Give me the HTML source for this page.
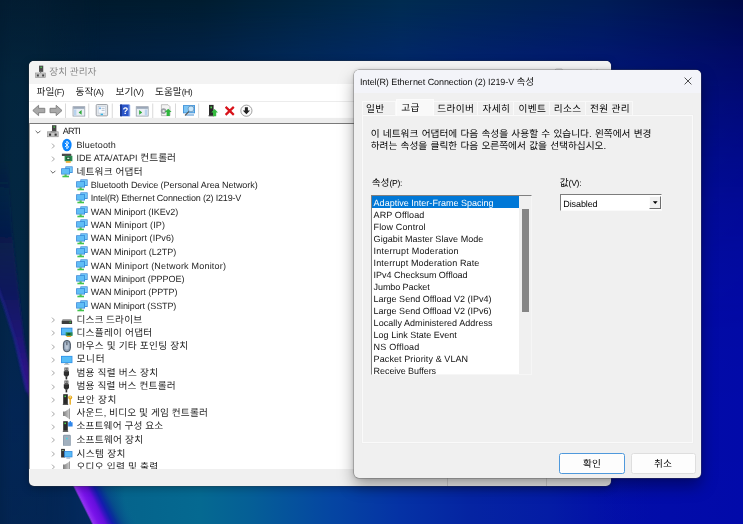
<!DOCTYPE html>
<html lang="ko"><head><meta charset="utf-8"><title>장치 관리자</title>
<style>
*{box-sizing:border-box;margin:0;padding:0}
html,body{width:743px;height:524px;overflow:hidden}
body{position:relative;-webkit-font-smoothing:antialiased;text-rendering:geometricPrecision;font-family:"Liberation Sans","Noto Sans CJK KR",sans-serif;font-size:9px;color:#000;
background:#0a1a3c;}
#wall{position:absolute;left:0;top:0;width:743px;height:524px;}
#dm{will-change:transform;position:absolute;left:29px;top:61px;width:582px;height:425px;background:#f0f0f0;border-radius:5px;overflow:hidden;box-shadow:0 0 0 0.5px rgba(60,60,60,.5),0 2px 8px rgba(0,0,0,.3)}
#dm .title{position:absolute;left:0;top:0;width:100%;height:23px;background:#f3f3f3}
#dm .title .t{position:absolute;left:20.3px;top:6.2px;color:#8a8a8a;font-size:9.67px;line-height:12px;white-space:nowrap}
#dm .menu{position:absolute;left:0;top:23px;width:100%;height:16.5px;background:#fff}
#dm .menu span{position:absolute;top:2.4px;line-height:12px;white-space:nowrap;font-size:9.67px;color:#1a1a1a}
#dm .menu small{font-size:8.7px;letter-spacing:-0.5px}
#dm .tool{position:absolute;left:0;top:39.5px;width:100%;height:22px;background:#fff}
#dm .tool .sep{position:absolute;top:3px;width:1px;height:15px;background:#d0d0d0}
#dm .tool svg{position:absolute}
#tree{position:absolute;left:0;top:61.5px;width:100%;height:346px;background:#fff;border-top:1px solid #7a7a7a;border-left:1.5px solid #a4a4a4;overflow:hidden}
.tr{position:absolute;left:0;height:13.4px;width:100%}
.tr .ch{position:absolute;top:2.7px;width:8px;height:8px}
.tr .ic{position:absolute;top:-0.2px;width:12px;height:12px;overflow:visible}
.k{font-size:9.67px;position:relative;top:0.35px}
.tr .tt{position:absolute;top:-0.45px;color:#1e1e1e;line-height:12px;white-space:nowrap;font-size:9px}
#dlg{will-change:transform;position:absolute;left:354px;top:70px;width:347px;height:408px;background:#f0f0f0;border-radius:5px;overflow:hidden;box-shadow:0 0 0 0.5px rgba(80,80,80,.6), 0 8px 16px rgba(0,0,0,.36),0 0 4px rgba(0,0,0,.18)}
#dlg .title{position:absolute;left:-0.5px;top:0;width:347px;height:22.8px;background:#f3f4f9}
#dlg .title .t{position:absolute;letter-spacing:-0.075px;left:5.9px;top:5.5px;line-height:12px;white-space:nowrap;font-size:9px;color:#111}
#dlg .x{position:absolute;left:329.5px;top:7px;width:8px;height:8px}
.tab{position:absolute;top:31px;line-height:12px;white-space:nowrap;font-size:9.67px;letter-spacing:0.35px}
#panel{position:absolute;left:7px;top:45.3px;width:331.3px;height:327.7px;background:#f0f0f0;border:1px solid #fafafa;box-shadow:0 0 0 0.5px #ececec}
#seltab{position:absolute;left:41.5px;top:29px;width:38.2px;height:17.2px;background:#f9f9f9;border:1px solid #fcfcfc;border-bottom:none}
.utab{position:absolute;top:30.8px;height:14.8px;border:1px solid #f9f9f9;border-bottom:none;border-left:none}
.lbl small{font-size:8.6px;letter-spacing:-0.3px}
.lbl{position:absolute;line-height:12px;white-space:nowrap;font-size:9.67px}
#list{position:absolute;left:16.5px;top:124.5px;width:161px;height:180.5px;background:#fff;border:1px solid #808080;border-left-width:1.2px;border-right-color:#f6f6f6;border-bottom-color:#f6f6f6;overflow:hidden}
#track{position:absolute;left:146.7px;top:0;width:13.2px;height:100%;background:#f0f0f0}
#list .in{display:none}
.li{position:absolute;left:0;height:12px;line-height:14.2px;font-size:9px;white-space:nowrap;padding-left:1.6px;color:#111}
.li.sel{background:#0078d7;color:#fff;width:146.7px;height:11.9px}
#thumb{position:absolute;left:149.9px;top:13.1px;width:6.9px;height:103.7px;background:#858585}
#combo{position:absolute;left:205.5px;top:124.3px;width:102px;height:16.4px;background:#fff;border:1.2px solid #7c7c7c;border-right:1px solid #fafafa;border-bottom:1px solid #fafafa}
#combo .tx{position:absolute;left:2.3px;top:3.1px;letter-spacing:-0.1px;line-height:12px;font-size:9px}
#combo .btn{position:absolute;right:0;top:0.3px;width:12px;height:13.8px;background:#f0f0f0;border:1px solid #fdfdfd;border-right-color:#6e6e6e;border-bottom-color:#6e6e6e}
.btnk{position:absolute;top:383.2px;height:20.5px;background:#fdfdfd;border:1px solid #dedede;border-radius:2.5px;text-align:center;line-height:21.4px;font-size:9.67px}
</style></head><body>
<svg id="wall" viewBox="0 0 743 524" preserveAspectRatio="none">
<defs>
<linearGradient id="gt" x1="0" y1="0" x2="1" y2="0">
<stop offset="0" stop-color="#02182b"/><stop offset="0.27" stop-color="#001d30"/><stop offset="0.54" stop-color="#002c50"/><stop offset="0.81" stop-color="#001d56"/><stop offset="1" stop-color="#000a48"/>
</linearGradient>
<linearGradient id="gb" x1="0" y1="0" x2="1" y2="0">
<stop offset="0" stop-color="#031b3a"/><stop offset="0.1" stop-color="#032a5e"/><stop offset="0.4" stop-color="#05308c"/><stop offset="0.62" stop-color="#0318a2"/><stop offset="0.8" stop-color="#020ea8"/><stop offset="1" stop-color="#020aaa"/>
</linearGradient>
<linearGradient id="gm" x1="0" y1="0" x2="0" y2="1"><stop offset="0.0" stop-color="#fff" stop-opacity="0.000"/><stop offset="0.1" stop-color="#fff" stop-opacity="0.286"/><stop offset="0.2" stop-color="#fff" stop-opacity="0.510"/><stop offset="0.3" stop-color="#fff" stop-opacity="0.681"/><stop offset="0.4" stop-color="#fff" stop-opacity="0.805"/><stop offset="0.5" stop-color="#fff" stop-opacity="0.891"/><stop offset="0.6" stop-color="#fff" stop-opacity="0.947"/><stop offset="0.7" stop-color="#fff" stop-opacity="0.979"/><stop offset="0.8" stop-color="#fff" stop-opacity="0.994"/><stop offset="0.9" stop-color="#fff" stop-opacity="0.999"/><stop offset="1.0" stop-color="#fff" stop-opacity="1.000"/></linearGradient>
<mask id="mk"><rect width="743" height="524" fill="url(#gm)"/></mask>
<linearGradient id="gteal" gradientUnits="userSpaceOnUse" x1="0" y1="0" x2="743" y2="0">
<stop offset="0.129" stop-color="#04407a"/><stop offset="0.168" stop-color="#05648c"/><stop offset="0.27" stop-color="#056991"/><stop offset="0.336" stop-color="#055f96"/><stop offset="0.444" stop-color="#0546a2"/><stop offset="0.538" stop-color="#0532a5"/><stop offset="0.633" stop-color="#0524a2"/><stop offset="0.74" stop-color="#041ca5"/><stop offset="0.875" stop-color="#0310a8" stop-opacity="0"/>
</linearGradient>
<radialGradient id="teal" cx="0.5" cy="0.5" r="0.5">
<stop offset="0" stop-color="#067090" stop-opacity="1"/><stop offset="0.5" stop-color="#066a90" stop-opacity="0.9"/><stop offset="1" stop-color="#06569a" stop-opacity="0"/>
</radialGradient>
<linearGradient id="gs" x1="0" y1="0" x2="1" y2="0">
<stop offset="0" stop-color="#9a3af4" stop-opacity="0.4"/><stop offset="0.03" stop-color="#9030f2"/><stop offset="0.12" stop-color="#7a14ea"/><stop offset="0.24" stop-color="#640edc"/><stop offset="0.3" stop-color="#3a14c4"/><stop offset="0.37" stop-color="#141cae"/><stop offset="0.44" stop-color="#08309a"/><stop offset="0.56" stop-color="#064c8c" stop-opacity="0.8"/><stop offset="0.85" stop-color="#066a90" stop-opacity="0"/>
</linearGradient>
<linearGradient id="gband" gradientUnits="userSpaceOnUse" x1="0" y1="160" x2="0" y2="400">
<stop offset="0" stop-color="#0c1a56" stop-opacity="0"/><stop offset="0.3" stop-color="#0a1850" stop-opacity="0.6"/><stop offset="0.55" stop-color="#10165e" stop-opacity="0.95"/><stop offset="0.8" stop-color="#241480" stop-opacity="1"/><stop offset="1" stop-color="#4414a2" stop-opacity="1"/>
</linearGradient>
<linearGradient id="gl" gradientUnits="userSpaceOnUse" x1="0" y1="0" x2="0" y2="524">
<stop offset="0" stop-color="#031f35" stop-opacity="0.7"/><stop offset="0.16" stop-color="#03263e" stop-opacity="0.95"/><stop offset="0.5" stop-color="#032844" stop-opacity="0.95"/><stop offset="0.78" stop-color="#032655" stop-opacity="0.95"/><stop offset="1" stop-color="#032655" stop-opacity="0.9"/>
</linearGradient>
<linearGradient id="glm" gradientUnits="userSpaceOnUse" x1="0" y1="0" x2="100" y2="0">
<stop offset="0" stop-color="#fff" stop-opacity="0.75"/><stop offset="0.12" stop-color="#fff" stop-opacity="1"/><stop offset="0.35" stop-color="#fff" stop-opacity="1"/><stop offset="1" stop-color="#fff" stop-opacity="0"/>
</linearGradient>
<mask id="mkl"><rect width="100" height="524" fill="url(#glm)"/></mask>
<filter id="bl" x="-50%" y="-50%" width="200%" height="200%"><feGaussianBlur stdDeviation="1.2"/></filter>
<filter id="bl2" x="-50%" y="-50%" width="200%" height="200%"><feGaussianBlur stdDeviation="5"/></filter>
<clipPath id="cp"><path d="M96 480 L743 480 L743 524 L118 524 Z"/></clipPath>
</defs>
<rect width="743" height="524" fill="url(#gt)"/>
<rect width="743" height="524" fill="url(#gb)" mask="url(#mk)"/>
<rect width="100" height="524" fill="url(#gl)" mask="url(#mkl)"/>
<g clip-path="url(#cp)"><rect x="0" y="470" width="743" height="54" fill="url(#gteal)"/></g>
<path d="M29.5 368 L24 340 L20 305 L16 268 L12 230 L10 200 L8 160 L-5 160 L-5 286 L4 305 L15 340 L26 389 L31 400 Z" fill="url(#gband)" filter="url(#bl)"/>
<path d="M-2 288 L4 305 L15 340 L27 392" fill="none" stroke="#2a28a6" stroke-width="2" opacity="0.65" filter="url(#bl)"/>
<g transform="translate(74,487) skewX(26.6)"><rect x="-0.5" y="-6" width="56" height="46" fill="url(#gs)"/></g>
</svg>
<div id="dm">
 <div class="title"><svg viewBox="0 0 12 14" style="position:absolute;left:6.2px;top:4px;width:11px;height:13px"><rect x="4.4" y="0.6" width="4.6" height="6.8" fill="#4a4a4a"/><rect x="5.9" y="1.8" width="1.6" height="1.4" fill="#4fd24f"/><rect x="5.6" y="7" width="1.2" height="2" fill="#777"/><rect x="0.6" y="8.6" width="10.8" height="5" fill="#c8c8c8" stroke="#8a8a8a" stroke-width="0.6"/><rect x="2" y="10.2" width="2.2" height="2.2" fill="#444"/><rect x="7.8" y="10.2" width="2.2" height="2.2" fill="#444"/></svg><span class="t">장치 관리자</span>
 <svg viewBox="0 0 70 12" style="position:absolute;left:506px;top:6px;width:70px;height:12px"><path d="M2 6 H9" stroke="#b4b4b4" stroke-width="0.8"/><rect x="20.4" y="2" width="7" height="7" rx="1" fill="none" stroke="#b4b4b4" stroke-width="0.8"/><path d="M55.5 2 L62.5 9 M62.5 2 L55.5 9" stroke="#b4b4b4" stroke-width="0.8"/></svg></div>
 <div class="menu"><span style="left:7.5px">파일<small>(F)</small></span><span style="left:46.5px">동작<small>(A)</small></span><span style="left:86.5px">보기<small>(V)</small></span><span style="left:126px">도움말<small>(H)</small></span></div>
 <div class="tool"><svg viewBox="29 100.5 582 22" style="left:0;top:0;width:582px;height:22px">
<rect x="29" y="117.4" width="582" height="5.2" fill="#ededed"/><rect x="29" y="100.5" width="582" height="0.6" fill="#e0e0e0"/>
<g fill="#d0d0d0"><rect x="65.2" y="103" width="0.8" height="14.5"/><rect x="88.4" y="103" width="0.8" height="14.5"/><rect x="111.8" y="103" width="0.8" height="14.5"/><rect x="152.4" y="103" width="0.8" height="14.5"/><rect x="175" y="103" width="0.8" height="14.5"/><rect x="198.3" y="103" width="0.8" height="14.5"/></g>
<path d="M32.8 110 L38.6 104.8 L38.6 107.8 L44.8 107.8 L44.8 112.2 L38.6 112.2 L38.6 115.2 Z" fill="#a8a8a8" stroke="#7e7e7e" stroke-width="0.9" stroke-linejoin="round"/>
<path d="M62 110 L56.2 104.8 L56.2 107.8 L50 107.8 L50 112.2 L56.2 112.2 L56.2 115.2 Z" fill="#a8a8a8" stroke="#7e7e7e" stroke-width="0.9" stroke-linejoin="round"/>
<g><rect x="73" y="106.2" width="11.8" height="9.4" fill="#e9eef4" stroke="#8b95a3" stroke-width="0.7"/><rect x="73.3" y="106.5" width="11.2" height="1.8" fill="#9aa7b8"/><rect x="74" y="109" width="2.4" height="6" fill="#b9d3ee"/><path d="M81.6 109.6 L81.6 114.2 L78.6 111.9 Z" fill="#2eaa3a"/></g>
<g><rect x="96.2" y="104" width="11.4" height="11.4" rx="1" fill="#e4e8ec" stroke="#8a8f96" stroke-width="0.8"/><rect x="98.2" y="106" width="7.4" height="6.6" fill="#f7fbff" stroke="#b8c4d2" stroke-width="0.5"/><rect x="99.2" y="107" width="1.6" height="1.6" fill="#5aa0e0"/><rect x="101.6" y="107.4" width="3" height="0.7" fill="#9ab"/><rect x="101.6" y="109.4" width="3" height="0.7" fill="#9ab"/><rect x="100.6" y="113.2" width="2.4" height="1.4" fill="#35b6e8"/></g>
<g><rect x="120" y="104" width="9.8" height="11.8" rx="0.8" fill="#2a55c8"/><rect x="120" y="104" width="2" height="11.8" fill="#1c3c9a"/><rect x="128.6" y="104.6" width="1.6" height="11.2" fill="#7f9fe8"/><text x="125.4" y="113.6" font-family="Liberation Sans,sans-serif" font-size="9.5" font-weight="bold" fill="#fff" text-anchor="middle">?</text></g>
<g><rect x="136.2" y="106.2" width="12" height="9.4" fill="#e9eef4" stroke="#8b95a3" stroke-width="0.7"/><rect x="136.5" y="106.5" width="11.4" height="1.8" fill="#9aa7b8"/><rect x="144.8" y="109" width="2.4" height="6" fill="#b9d3ee"/><path d="M139.2 109.6 L139.2 114.2 L142.2 111.9 Z" fill="#2eaa3a"/></g>
<g><path d="M161.4 104.2 H168 L170 106.2 V115.2 H161.4 Z" fill="#f4f4f4" stroke="#9a9a9a" stroke-width="0.6"/><circle cx="163.6" cy="110.6" r="2.8" fill="#9a9ea4"/><circle cx="163.6" cy="110.6" r="1.2" fill="#e8e8e8"/><path d="M168.2 108.2 L171.6 111.6 H169.8 V115.6 H166.6 V111.6 H164.8 Z" fill="#2fb53c"/></g>
<g><rect x="183" y="104.6" width="12" height="8.2" fill="#3d8fd8"/><rect x="183.8" y="105.4" width="10.4" height="6.6" fill="#7cc4f4"/><rect x="186" y="114" width="8" height="1" fill="#4a90d0"/><circle cx="191" cy="108.4" r="2.9" fill="#c8e6fa" stroke="#5a86b0" stroke-width="0.7"/><path d="M189 110.8 L185 115" stroke="#555" stroke-width="1.1"/></g>
<g><rect x="209" y="104.4" width="4.6" height="10.6" fill="#2a2a2a"/><rect x="208.6" y="114.6" width="5.6" height="1.2" fill="#444"/><rect x="210.4" y="106" width="1.6" height="1.8" fill="#4ad04a"/><path d="M214.6 108.6 L218 112 H216.2 V115.8 H213 V112 H211.2 Z" fill="#35bb40"/></g>
<path d="M225.6 106.4 L233.8 114.4 M233.8 106.4 L225.6 114.4" stroke="#d8121a" stroke-width="2.2" fill="none"/>
<g><circle cx="246.4" cy="110.2" r="5.6" fill="#fafafa" stroke="#8a8a8a" stroke-width="0.8"/><path d="M244.9 106.8 H247.9 V110 H250 L246.4 113.8 L242.8 110 H244.9 Z" fill="#222"/></g>
</svg></div>
 <div id="tree">
<div class="tr" style="top:2.1px;left:-1.5px"><svg class="ch" style="left:5.7px" viewBox="0 0 8 8"><path d="M1.6 2.8 L4 5.2 L6.4 2.8" fill="none" stroke="#555" stroke-width="0.9"/></svg><svg class="ic" style="left:18.0px" viewBox="0 0 12 12"><rect x="5" y="0.2" width="4.4" height="6.6" fill="#454545"/><rect x="6.5" y="1.4" width="1.5" height="1.3" fill="#4fd24f"/><rect x="0.6" y="6.8" width="10.6" height="5" fill="#c4c4c4" stroke="#8c8c8c" stroke-width="0.6"/><rect x="3.6" y="6" width="5" height="1.6" fill="#8e8e8e"/><rect x="2" y="8.6" width="2.1" height="2.1" fill="#333"/><rect x="7.6" y="8.6" width="2.1" height="2.1" fill="#333"/></svg><span class="tt" style="left:34.2px;letter-spacing:-0.717px;">ARTI</span></div>
<div class="tr" style="top:15.5px;left:-1.5px"><svg class="ch" style="left:20.0px" viewBox="0 0 8 8"><path d="M3 1.6 L5.4 4 L3 6.4" fill="none" stroke="#999" stroke-width="0.9"/></svg><svg class="ic" style="left:32.7px" viewBox="0 0 12 12"><ellipse cx="5.9" cy="6" rx="4.7" ry="6.3" fill="#0a84ff"/><path d="M3.9 3.9 L7.7 7.9 L5.9 9.8 L5.9 2.2 L7.7 4.1 L3.9 8.1" stroke="#fff" stroke-width="0.9" fill="none"/></svg><span class="tt" style="left:47.9px;letter-spacing:0.162px;">Bluetooth</span></div>
<div class="tr" style="top:28.9px;left:-1.5px"><svg class="ch" style="left:20.0px" viewBox="0 0 8 8"><path d="M3 1.6 L5.4 4 L3 6.4" fill="none" stroke="#999" stroke-width="0.9"/></svg><svg class="ic" style="left:32.7px" viewBox="0 0 12 12"><rect x="0.9" y="1.2" width="9" height="1" fill="#bdbdbd"/><rect x="0.9" y="2" width="9.4" height="2" fill="#4a4a4a"/><rect x="3.6" y="3.8" width="7.8" height="5.4" fill="#2b8c52"/><rect x="5.3" y="5" width="4" height="2.8" fill="#174f2e"/><rect x="6.2" y="5.7" width="2.2" height="1.4" fill="#cfe8d6"/><rect x="4.8" y="9.2" width="5" height="1.5" fill="#e6a21c"/></svg><span class="tt" style="left:47.9px;letter-spacing:0.071px;">IDE ATA/ATAPI <span class="k">컨트롤러</span></span></div>
<div class="tr" style="top:42.3px;left:-1.5px"><svg class="ch" style="left:20.0px" viewBox="0 0 8 8"><path d="M1.6 2.8 L4 5.2 L6.4 2.8" fill="none" stroke="#555" stroke-width="0.9"/></svg><svg class="ic" style="left:32.7px" viewBox="0 0 12 12"><rect x="4.4" y="0.4" width="7.2" height="6.6" fill="#2b7fd6"/><rect x="5.1" y="1.1" width="5.8" height="5.2" fill="#74caf9"/><rect x="0.2" y="2.3" width="8.8" height="6.2" fill="#2b7fd6"/><rect x="0.9" y="3" width="7.4" height="4.8" fill="#5fbdf6"/><rect x="3.5" y="8.5" width="2.2" height="1.3" fill="#35a83c"/><rect x="1.4" y="9.7" width="6.6" height="1.6" fill="#42c44c"/></svg><span class="tt" style="left:47.9px;letter-spacing:0.214px;"><span class="k">네트워크</span> <span class="k">어댑터</span></span></div>
<div class="tr" style="top:55.7px;left:-1.5px"><svg class="ic" style="left:47.0px" viewBox="0 0 12 12"><rect x="4.4" y="0.4" width="7.2" height="6.6" fill="#2b7fd6"/><rect x="5.1" y="1.1" width="5.8" height="5.2" fill="#74caf9"/><rect x="0.2" y="2.3" width="8.8" height="6.2" fill="#2b7fd6"/><rect x="0.9" y="3" width="7.4" height="4.8" fill="#5fbdf6"/><rect x="3.5" y="8.5" width="2.2" height="1.3" fill="#35a83c"/><rect x="1.4" y="9.7" width="6.6" height="1.6" fill="#42c44c"/></svg><span class="tt" style="left:62.3px;letter-spacing:-0.042px;">Bluetooth Device (Personal Area Network)</span></div>
<div class="tr" style="top:69.1px;left:-1.5px"><svg class="ic" style="left:47.0px" viewBox="0 0 12 12"><rect x="4.4" y="0.4" width="7.2" height="6.6" fill="#2b7fd6"/><rect x="5.1" y="1.1" width="5.8" height="5.2" fill="#74caf9"/><rect x="0.2" y="2.3" width="8.8" height="6.2" fill="#2b7fd6"/><rect x="0.9" y="3" width="7.4" height="4.8" fill="#5fbdf6"/><rect x="3.5" y="8.5" width="2.2" height="1.3" fill="#35a83c"/><rect x="1.4" y="9.7" width="6.6" height="1.6" fill="#42c44c"/></svg><span class="tt" style="left:62.3px;letter-spacing:-0.176px;">Intel(R) Ethe<span style="letter-spacing:0.45px">r</span>net Connection (2) I219-V</span></div>
<div class="tr" style="top:82.5px;left:-1.5px"><svg class="ic" style="left:47.0px" viewBox="0 0 12 12"><rect x="4.4" y="0.4" width="7.2" height="6.6" fill="#2b7fd6"/><rect x="5.1" y="1.1" width="5.8" height="5.2" fill="#74caf9"/><rect x="0.2" y="2.3" width="8.8" height="6.2" fill="#2b7fd6"/><rect x="0.9" y="3" width="7.4" height="4.8" fill="#5fbdf6"/><rect x="3.5" y="8.5" width="2.2" height="1.3" fill="#35a83c"/><rect x="1.4" y="9.7" width="6.6" height="1.6" fill="#42c44c"/></svg><span class="tt" style="left:62.3px;letter-spacing:-0.011px;">WAN Miniport (IKEv2)</span></div>
<div class="tr" style="top:95.9px;left:-1.5px"><svg class="ic" style="left:47.0px" viewBox="0 0 12 12"><rect x="4.4" y="0.4" width="7.2" height="6.6" fill="#2b7fd6"/><rect x="5.1" y="1.1" width="5.8" height="5.2" fill="#74caf9"/><rect x="0.2" y="2.3" width="8.8" height="6.2" fill="#2b7fd6"/><rect x="0.9" y="3" width="7.4" height="4.8" fill="#5fbdf6"/><rect x="3.5" y="8.5" width="2.2" height="1.3" fill="#35a83c"/><rect x="1.4" y="9.7" width="6.6" height="1.6" fill="#42c44c"/></svg><span class="tt" style="left:62.3px;letter-spacing:0.125px;">WAN Miniport (IP)</span></div>
<div class="tr" style="top:109.3px;left:-1.5px"><svg class="ic" style="left:47.0px" viewBox="0 0 12 12"><rect x="4.4" y="0.4" width="7.2" height="6.6" fill="#2b7fd6"/><rect x="5.1" y="1.1" width="5.8" height="5.2" fill="#74caf9"/><rect x="0.2" y="2.3" width="8.8" height="6.2" fill="#2b7fd6"/><rect x="0.9" y="3" width="7.4" height="4.8" fill="#5fbdf6"/><rect x="3.5" y="8.5" width="2.2" height="1.3" fill="#35a83c"/><rect x="1.4" y="9.7" width="6.6" height="1.6" fill="#42c44c"/></svg><span class="tt" style="left:62.3px;letter-spacing:0.083px;">WAN Miniport (IPv6)</span></div>
<div class="tr" style="top:122.7px;left:-1.5px"><svg class="ic" style="left:47.0px" viewBox="0 0 12 12"><rect x="4.4" y="0.4" width="7.2" height="6.6" fill="#2b7fd6"/><rect x="5.1" y="1.1" width="5.8" height="5.2" fill="#74caf9"/><rect x="0.2" y="2.3" width="8.8" height="6.2" fill="#2b7fd6"/><rect x="0.9" y="3" width="7.4" height="4.8" fill="#5fbdf6"/><rect x="3.5" y="8.5" width="2.2" height="1.3" fill="#35a83c"/><rect x="1.4" y="9.7" width="6.6" height="1.6" fill="#42c44c"/></svg><span class="tt" style="left:62.3px;letter-spacing:0.022px;">WAN Miniport (L2TP)</span></div>
<div class="tr" style="top:136.1px;left:-1.5px"><svg class="ic" style="left:47.0px" viewBox="0 0 12 12"><rect x="4.4" y="0.4" width="7.2" height="6.6" fill="#2b7fd6"/><rect x="5.1" y="1.1" width="5.8" height="5.2" fill="#74caf9"/><rect x="0.2" y="2.3" width="8.8" height="6.2" fill="#2b7fd6"/><rect x="0.9" y="3" width="7.4" height="4.8" fill="#5fbdf6"/><rect x="3.5" y="8.5" width="2.2" height="1.3" fill="#35a83c"/><rect x="1.4" y="9.7" width="6.6" height="1.6" fill="#42c44c"/></svg><span class="tt" style="left:62.3px;letter-spacing:0.207px;margin-top:1px;">WAN Miniport (Network Monitor)</span></div>
<div class="tr" style="top:149.5px;left:-1.5px"><svg class="ic" style="left:47.0px" viewBox="0 0 12 12"><rect x="4.4" y="0.4" width="7.2" height="6.6" fill="#2b7fd6"/><rect x="5.1" y="1.1" width="5.8" height="5.2" fill="#74caf9"/><rect x="0.2" y="2.3" width="8.8" height="6.2" fill="#2b7fd6"/><rect x="0.9" y="3" width="7.4" height="4.8" fill="#5fbdf6"/><rect x="3.5" y="8.5" width="2.2" height="1.3" fill="#35a83c"/><rect x="1.4" y="9.7" width="6.6" height="1.6" fill="#42c44c"/></svg><span class="tt" style="left:62.3px;letter-spacing:-0.058px;">WAN Miniport (PPPOE)</span></div>
<div class="tr" style="top:162.9px;left:-1.5px"><svg class="ic" style="left:47.0px" viewBox="0 0 12 12"><rect x="4.4" y="0.4" width="7.2" height="6.6" fill="#2b7fd6"/><rect x="5.1" y="1.1" width="5.8" height="5.2" fill="#74caf9"/><rect x="0.2" y="2.3" width="8.8" height="6.2" fill="#2b7fd6"/><rect x="0.9" y="3" width="7.4" height="4.8" fill="#5fbdf6"/><rect x="3.5" y="8.5" width="2.2" height="1.3" fill="#35a83c"/><rect x="1.4" y="9.7" width="6.6" height="1.6" fill="#42c44c"/></svg><span class="tt" style="left:62.3px;letter-spacing:-0.022px;">WAN Miniport (PPTP)</span></div>
<div class="tr" style="top:176.3px;left:-1.5px"><svg class="ic" style="left:47.0px" viewBox="0 0 12 12"><rect x="4.4" y="0.4" width="7.2" height="6.6" fill="#2b7fd6"/><rect x="5.1" y="1.1" width="5.8" height="5.2" fill="#74caf9"/><rect x="0.2" y="2.3" width="8.8" height="6.2" fill="#2b7fd6"/><rect x="0.9" y="3" width="7.4" height="4.8" fill="#5fbdf6"/><rect x="3.5" y="8.5" width="2.2" height="1.3" fill="#35a83c"/><rect x="1.4" y="9.7" width="6.6" height="1.6" fill="#42c44c"/></svg><span class="tt" style="left:62.3px;letter-spacing:-0.089px;margin-top:1px;">WAN Miniport (SSTP)</span></div>
<div class="tr" style="top:189.7px;left:-1.5px"><svg class="ch" style="left:20.0px" viewBox="0 0 8 8"><path d="M3 1.6 L5.4 4 L3 6.4" fill="none" stroke="#999" stroke-width="0.9"/></svg><svg class="ic" style="left:32.7px" viewBox="0 0 12 12"><path d="M1.8 6 H10 L11 7.6 H0.8 Z" fill="#a8a8a8"/><rect x="0.7" y="7.4" width="10.4" height="3.6" rx="0.6" fill="#3e3e3e"/><rect x="8.4" y="8.7" width="1.6" height="1" fill="#3fd04a"/></svg><span class="tt" style="left:47.9px;letter-spacing:0.136px;margin-top:1px;"><span class="k">디스크</span> <span class="k">드라이브</span></span></div>
<div class="tr" style="top:203.1px;left:-1.5px"><svg class="ch" style="left:20.0px" viewBox="0 0 8 8"><path d="M3 1.6 L5.4 4 L3 6.4" fill="none" stroke="#999" stroke-width="0.9"/></svg><svg class="ic" style="left:32.7px" viewBox="0 0 12 12"><rect x="0" y="1.7" width="11.4" height="7.6" fill="#2b83dc"/><rect x="0.8" y="2.5" width="9.8" height="6" fill="#58bbf7"/><rect x="4.7" y="6.3" width="6.8" height="3.6" fill="#2b8c52"/><rect x="6.4" y="7.1" width="3" height="1.8" fill="#174f2e"/><rect x="5.6" y="9.9" width="4.6" height="1.1" fill="#e6a21c"/></svg><span class="tt" style="left:47.9px;letter-spacing:0.281px;"><span class="k">디스플레이</span> <span class="k">어댑터</span></span></div>
<div class="tr" style="top:216.5px;left:-1.5px"><svg class="ch" style="left:20.0px" viewBox="0 0 8 8"><path d="M3 1.6 L5.4 4 L3 6.4" fill="none" stroke="#999" stroke-width="0.9"/></svg><svg class="ic" style="left:32.7px" viewBox="0 0 12 12"><rect x="2.4" y="0.4" width="7" height="11.4" rx="3.5" fill="#8fa0b4" stroke="#3c4653" stroke-width="0.9"/><rect x="4.2" y="2" width="3.4" height="7.6" rx="1.7" fill="#b9c6d6"/><rect x="5.4" y="1.8" width="1" height="3.4" fill="#3c4653"/></svg><span class="tt" style="left:47.9px;letter-spacing:0.286px;"><span class="k">마우스</span> <span class="k">및</span> <span class="k">기타</span> <span class="k">포인팅</span> <span class="k">장치</span></span></div>
<div class="tr" style="top:229.9px;left:-1.5px"><svg class="ch" style="left:20.0px" viewBox="0 0 8 8"><path d="M3 1.6 L5.4 4 L3 6.4" fill="none" stroke="#999" stroke-width="0.9"/></svg><svg class="ic" style="left:32.7px" viewBox="0 0 12 12"><rect x="0" y="2.9" width="11.4" height="7.2" fill="#2b8ae4"/><rect x="0.7" y="3.6" width="10" height="5.8" fill="#56bdf8"/><rect x="4.2" y="10.1" width="3" height="0.9" fill="#9aa"/><rect x="3" y="10.9" width="5.4" height="0.9" fill="#b4bcc4"/></svg><span class="tt" style="left:47.9px;letter-spacing:0.750px;"><span class="k">모니터</span></span></div>
<div class="tr" style="top:243.3px;left:-1.5px"><svg class="ch" style="left:20.0px" viewBox="0 0 8 8"><path d="M3 1.6 L5.4 4 L3 6.4" fill="none" stroke="#999" stroke-width="0.9"/></svg><svg class="ic" style="left:32.7px" viewBox="0 0 12 12"><rect x="3.4" y="0.5" width="4" height="4" fill="#5a5a5a"/><rect x="4.2" y="1.5" width="0.9" height="1.2" fill="#ddd"/><rect x="5.7" y="1.5" width="0.9" height="1.2" fill="#ddd"/><path d="M2.8 4.2 H8 V8 L6.6 9.6 H4.2 L2.8 8 Z" fill="#2e2e2e"/><rect x="4.6" y="9.4" width="1.6" height="3" fill="#2e2e2e"/></svg><span class="tt" style="left:47.9px;letter-spacing:0.305px;"><span class="k">범용</span> <span class="k">직렬</span> <span class="k">버스</span> <span class="k">장치</span></span></div>
<div class="tr" style="top:256.7px;left:-1.5px"><svg class="ch" style="left:20.0px" viewBox="0 0 8 8"><path d="M3 1.6 L5.4 4 L3 6.4" fill="none" stroke="#999" stroke-width="0.9"/></svg><svg class="ic" style="left:32.7px" viewBox="0 0 12 12"><rect x="3.4" y="0.5" width="4" height="4" fill="#5a5a5a"/><rect x="4.2" y="1.5" width="0.9" height="1.2" fill="#ddd"/><rect x="5.7" y="1.5" width="0.9" height="1.2" fill="#ddd"/><path d="M2.8 4.2 H8 V8 L6.6 9.6 H4.2 L2.8 8 Z" fill="#2e2e2e"/><rect x="4.6" y="9.4" width="1.6" height="3" fill="#2e2e2e"/></svg><span class="tt" style="left:47.9px;letter-spacing:0.242px;"><span class="k">범용</span> <span class="k">직렬</span> <span class="k">버스</span> <span class="k">컨트롤러</span></span></div>
<div class="tr" style="top:270.1px;left:-1.5px"><svg class="ch" style="left:20.0px" viewBox="0 0 8 8"><path d="M3 1.6 L5.4 4 L3 6.4" fill="none" stroke="#999" stroke-width="0.9"/></svg><svg class="ic" style="left:32.7px" viewBox="0 0 12 12"><rect x="2.2" y="1.2" width="4.6" height="9.8" fill="#2a2a2a"/><rect x="1.8" y="10.8" width="5.4" height="1.2" fill="#555"/><rect x="3.4" y="2.6" width="1.6" height="1.5" fill="#4fd24f"/><circle cx="9.2" cy="4.6" r="2" fill="#e8ab1e"/><circle cx="9.2" cy="4" r="0.7" fill="#fff6d8"/><path d="M8.5 6 H9.9 V11.2 L9.2 12 L8.5 11.2 Z" fill="#e8ab1e"/></svg><span class="tt" style="left:47.9px;letter-spacing:0.462px;"><span class="k">보안</span> <span class="k">장치</span></span></div>
<div class="tr" style="top:283.5px;left:-1.5px"><svg class="ch" style="left:20.0px" viewBox="0 0 8 8"><path d="M3 1.6 L5.4 4 L3 6.4" fill="none" stroke="#999" stroke-width="0.9"/></svg><svg class="ic" style="left:32.7px" viewBox="0 0 12 12"><defs><linearGradient id="sg" x1="0" y1="0" x2="1" y2="0"><stop offset="0" stop-color="#7c7c7c"/><stop offset="1" stop-color="#cfcfcf"/></linearGradient></defs><path d="M2 4.6 H4 L8.6 1.4 V12.2 L4 9 H2 Z" fill="url(#sg)"/><rect x="8" y="1.4" width="0.8" height="10.8" fill="#8a8a8a"/></svg><span class="tt" style="left:47.9px;letter-spacing:0.203px;"><span class="k">사운드</span>, <span class="k">비디오</span> <span class="k">및</span> <span class="k">게임</span> <span class="k">컨트롤러</span></span></div>
<div class="tr" style="top:296.9px;left:-1.5px"><svg class="ch" style="left:20.0px" viewBox="0 0 8 8"><path d="M3 1.6 L5.4 4 L3 6.4" fill="none" stroke="#999" stroke-width="0.9"/></svg><svg class="ic" style="left:32.7px" viewBox="0 0 12 12"><rect x="2.2" y="1.2" width="4.6" height="9.6" fill="#2a2a2a"/><rect x="1.8" y="10.7" width="5.4" height="1.2" fill="#555"/><rect x="3.4" y="2.6" width="1.6" height="1.5" fill="#4fd24f"/><path d="M7.2 2.2 H8.6 V1 H10 V2.2 H11.6 V6.4 H7.2 Z" fill="#2f86ea"/></svg><span class="tt" style="left:47.9px;letter-spacing:0.180px;"><span class="k">소프트웨어</span> <span class="k">구성</span> <span class="k">요소</span></span></div>
<div class="tr" style="top:310.3px;left:-1.5px"><svg class="ch" style="left:20.0px" viewBox="0 0 8 8"><path d="M3 1.6 L5.4 4 L3 6.4" fill="none" stroke="#999" stroke-width="0.9"/></svg><svg class="ic" style="left:32.7px" viewBox="0 0 12 12"><path d="M2 2 Q2 0.8 3.2 0.8 H8.6 Q9.8 0.8 9.8 2 V11.8 H2 Z" fill="#8c9cac"/><rect x="2.8" y="1.8" width="6.2" height="9.2" fill="#a2b0be"/><rect x="5" y="3.8" width="1.7" height="1.5" fill="#3fd6e6"/></svg><span class="tt" style="left:47.9px;letter-spacing:0.279px;"><span class="k">소프트웨어</span> <span class="k">장치</span></span></div>
<div class="tr" style="top:323.7px;left:-1.5px"><svg class="ch" style="left:20.0px" viewBox="0 0 8 8"><path d="M3 1.6 L5.4 4 L3 6.4" fill="none" stroke="#999" stroke-width="0.9"/></svg><svg class="ic" style="left:32.7px" viewBox="0 0 12 12"><rect x="0.1" y="1.9" width="3.8" height="8.6" fill="#333"/><rect x="0.8" y="3" width="2" height="0.8" fill="#9c9"/><rect x="3.2" y="4.1" width="8.2" height="6.2" fill="#2b83dc"/><rect x="3.9" y="4.8" width="6.8" height="4.8" fill="#58bbf7"/><rect x="5.4" y="10.3" width="3.8" height="1.4" fill="#9ab4cc"/></svg><span class="tt" style="left:47.9px;letter-spacing:0.400px;margin-top:1px;"><span class="k">시스템</span> <span class="k">장치</span></span></div>
<div class="tr" style="top:337.1px;left:-1.5px"><svg class="ch" style="left:20.0px" viewBox="0 0 8 8"><path d="M3 1.6 L5.4 4 L3 6.4" fill="none" stroke="#999" stroke-width="0.9"/></svg><svg class="ic" style="left:32.7px" viewBox="0 0 12 12"><defs><linearGradient id="sg" x1="0" y1="0" x2="1" y2="0"><stop offset="0" stop-color="#7c7c7c"/><stop offset="1" stop-color="#cfcfcf"/></linearGradient></defs><path d="M2 4.6 H4 L8.6 1.4 V12.2 L4 9 H2 Z" fill="url(#sg)"/><rect x="8" y="1.4" width="0.8" height="10.8" fill="#8a8a8a"/></svg><span class="tt" style="left:47.9px;letter-spacing:0.305px;"><span class="k">오디오</span> <span class="k">입력</span> <span class="k">및</span> <span class="k">출력</span></span></div>
 </div>
 <div style="position:absolute;left:417.5px;top:409.5px;width:0.8px;height:15px;background:#d4d4d4"></div><div style="position:absolute;left:516.5px;top:409.5px;width:0.8px;height:15px;background:#d4d4d4"></div>
</div>
<div id="dlg"><div id="dlgin" style="position:absolute;left:0.5px;top:0;width:346px;height:407.5px">
 <div class="title"><span class="t">Intel(R) Ethe<span style="letter-spacing:0.5px">r</span>net Connection (2) I219-V <span class="k">속성</span></span></div>
 <svg class="x" viewBox="0 0 8 8"><path d="M0.6 0.6 L7.4 7.4 M7.4 0.6 L0.6 7.4" stroke="#222" stroke-width="0.8" fill="none"/></svg>
 <div id="panel"></div>
 <div class="utab" style="left:7px;width:34.5px;border-left:1px solid #f9f9f9"></div>
 <div class="utab" style="left:79.7px;width:43.8px"></div>
 <div class="utab" style="left:123.5px;width:35.8px"></div>
 <div class="utab" style="left:159.3px;width:35.9px"></div>
 <div class="utab" style="left:195.2px;width:36.1px"></div>
 <div class="utab" style="left:231.3px;width:47.2px"></div>
 <div id="seltab"></div>
 <span class="tab" style="left:11.5px;top:34px">일반</span>
 <span class="tab" style="left:46.8px;top:33px">고급</span>
 <span class="tab" style="left:82.8px;top:34px">드라이버</span>
 <span class="tab" style="left:128px;top:34px">자세히</span>
 <span class="tab" style="left:164px;top:34px">이벤트</span>
 <span class="tab" style="left:199.3px;top:34px">리소스</span>
 <span class="tab" style="left:235.5px;top:34px">전원 관리</span>
 <span class="lbl" style="left:16.2px;top:58.5px;word-spacing:0.58px">이 네트워크 어댑터에 다음 속성을 사용할 수 있습니다. 왼쪽에서 변경</span>
 <span class="lbl" style="left:16.2px;top:70.5px;word-spacing:0.58px">하려는 속성을 클릭한 다음 오른쪽에서 값을 선택하십시오.</span>
 <span class="lbl" style="left:17.2px;top:107px">속성<small>(P):</small></span>
 <span class="lbl" style="left:205.2px;top:107px">값<small>(V):</small></span>
 <div id="list"><div class="in"></div>
<div class="li sel" style="top:0.9px;letter-spacing:0.017px;">Adaptive Inter-Frame Spacing</div>
<div class="li" style="top:12.9px;letter-spacing:0.095px;">ARP Offload</div>
<div class="li" style="top:24.9px;letter-spacing:0.136px;">Flow Control</div>
<div class="li" style="top:36.9px;letter-spacing:0.050px;">Gigabit Master Slave Mode</div>
<div class="li" style="top:48.9px;letter-spacing:0.208px;">Interrupt Moderation</div>
<div class="li" style="top:60.9px;letter-spacing:0.133px;">Interrupt Moderation Rate</div>
<div class="li" style="top:72.9px;letter-spacing:-0.018px;">IPv4 Checksum Offload</div>
<div class="li" style="top:84.9px;letter-spacing:-0.082px;">Jumbo Packet</div>
<div class="li" style="top:96.9px;letter-spacing:0.002px;">Large Send Offload V2 (IPv4)</div>
<div class="li" style="top:108.9px;letter-spacing:0.002px;">Large Send Offload V2 (IPv6)</div>
<div class="li" style="top:120.9px;letter-spacing:0.050px;">Locally Administered Address</div>
<div class="li" style="top:132.9px;letter-spacing:0.008px;">Log Link State Event</div>
<div class="li" style="top:144.9px;letter-spacing:0.206px;">NS Offload</div>
<div class="li" style="top:156.9px;letter-spacing:0.095px;">Packet Priority &amp; VLAN</div>
<div class="li" style="top:168.9px;letter-spacing:-0.064px;">Receive Buffers</div>
 <div id="track"></div><div id="thumb"></div>
 </div>
 <div id="combo"><span class="tx">Disabled</span><div class="btn"><svg viewBox="0 0 9 11" style="position:absolute;left:0.8px;top:0.4px;width:8.5px;height:11px"><path d="M2 4.2 H7 L4.5 7 Z" fill="#000"/></svg></div></div>
 <div class="btnk" style="left:204.3px;width:66.2px;border-color:#4f99dc">확인</div>
 <div class="btnk" style="left:276px;width:65px">취소</div>
</div></div>
</body></html>
